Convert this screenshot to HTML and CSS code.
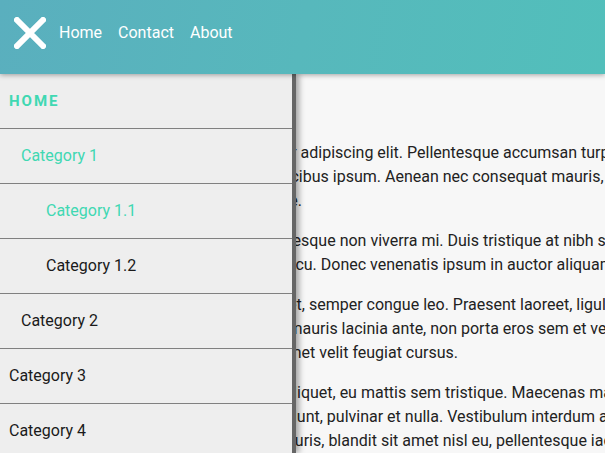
FILE: index.html
```html
<!DOCTYPE html>
<html>
<head>
<meta charset="utf-8">
<link rel="stylesheet" href="styles.css">
</head>
<body>
<header class="topbar">
  <button class="close-btn" aria-label="Close menu">
    <svg width="32" height="32" viewBox="0 0 32 32"><path d="M3 3 L29 29 M29 3 L3 29" stroke="#fff" stroke-width="6" stroke-linecap="square" fill="none"/></svg>
  </button>
  <nav class="topnav">
    <a href="#">Home</a>
    <a href="#">Contact</a>
    <a href="#">About</a>
  </nav>
</header>
<div class="page">
  <main class="content">
    <p><span class="ln">Lorem ipsum dolor sit amet, consectetur adipiscing elit. Pellentesque accumsan turpis</span><span class="ln">Praesent ut lorem ornare, tempus et faucibus ipsum. Aenean nec consequat mauris, vitae</span><span class="ln">Nulla facilisi. Etiam at tempor est ut ante.</span></p>
    <p><span class="ln">Vivamus ut dolor vitae lorem nisi pellentesque non viverra mi. Duis tristique at nibh sed</span><span class="ln">Sed gravida nibh et massa erat ornare arcu. Donec venenatis ipsum in auctor aliquam.</span></p>
    <p><span class="ln">Integer viverra, massa quis a ornare amet, semper congue leo. Praesent laoreet, ligula</span><span class="ln">Cras eleifend tempus nulla, quos etiam mauris lacinia ante, non porta eros sem et vel</span><span class="ln">In hac habitasse platea sem dictumst amet velit feugiat cursus.</span></p>
    <p><span class="ln">Donec vestibulum nibh vel quis nec mi aliquet, eu mattis sem tristique. Maecenas massa</span><span class="ln">Fusce sollicitudin nulla vitae lorem tincidunt, pulvinar et nulla. Vestibulum interdum a</span><span class="ln">Suspendisse potenti. Donec aliquam mauris, blandit sit amet nisl eu, pellentesque iaculis</span></p>
  </main>
  <aside class="drawer">
    <ul class="menu">
      <li class="item lvl0 home active">Home</li>
      <li class="item lvl1 active">Category 1</li>
      <li class="item lvl2 active">Category 1.1</li>
      <li class="item lvl2">Category 1.2</li>
      <li class="item lvl1">Category 2</li>
      <li class="item lvl0">Category 3</li>
      <li class="item lvl0">Category 4</li>
    </ul>
  </aside>
</div>
</body>
</html>
```
FILE: styles.css
```css
html, body {
  margin: 0;
  padding: 0;
  height: 100%;
  overflow: hidden;
  background: #f7f7f7;
  font-family: Roboto, "Noto Sans", sans-serif;
}
.topbar {
  position: relative;
  z-index: 3;
  height: 74px;
  display: flex;
  align-items: flex-start;
  padding: 17px 0 0 14px;
  background: linear-gradient(100deg, #5aafbe 0%, #57b8bc 50%, #52bfbb 100%);
  box-shadow: 0 1px 5px rgba(0,0,0,0.35);
  box-sizing: border-box;
}
.close-btn {
  background: none;
  border: 0;
  padding: 0;
  margin: 0;
  width: 32px;
  height: 32px;
  display: flex;
}
.topnav {
  display: flex;
  gap: 16px;
  margin-left: 13px;
  line-height: 32px;
}
.topnav a {
  color: #fff;
  text-decoration: none;
  font-size: 16px;
}
.page {
  position: relative;
  height: calc(100% - 74px);
}
.content {
  padding: 67px 0 0 9px;
  color: #222;
  font-size: 16px;
  line-height: 24px;
  white-space: nowrap;
}
.content p {
  margin: 0 0 16px 0;
}
.ln {
  display: block;
}
.drawer {
  position: absolute;
  top: 0;
  left: 0;
  bottom: 0;
  width: 292px;
  background: #eeeeee;
  border-right: 4px solid #666;
  box-shadow: 3px 0 6px rgba(0,0,0,0.35);
  z-index: 2;
}
.menu {
  list-style: none;
  margin: 0;
  padding: 0;
}
.item {
  height: 54px;
  line-height: 54px;
  border-bottom: 1px solid #808080;
  font-size: 16px;
  color: #1a1a1a;
}
.item.active {
  color: #40d8b2;
}
.lvl0 { padding-left: 9px; }
.lvl1 { padding-left: 21px; }
.lvl2 { padding-left: 46px; }
.home {
  text-transform: uppercase;
  font-weight: bold;
  font-size: 15px;
  letter-spacing: 2px;
}
```
